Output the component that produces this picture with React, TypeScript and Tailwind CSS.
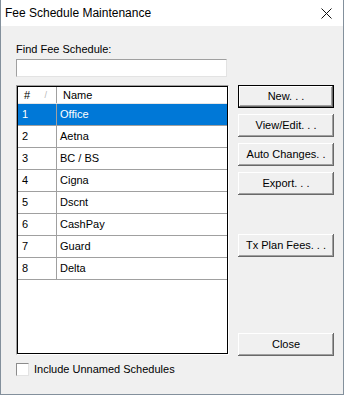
import React from 'react';

const schedules = [
  { id: 1, name: 'Office' },
  { id: 2, name: 'Aetna' },
  { id: 3, name: 'BC / BS' },
  { id: 4, name: 'Cigna' },
  { id: 5, name: 'Dscnt' },
  { id: 6, name: 'CashPay' },
  { id: 7, name: 'Guard' },
  { id: 8, name: 'Delta' },
];

const bevel =
  'shadow-[inset_-1px_-1px_0_#696969,inset_1px_1px_0_#ffffff,inset_-2px_-2px_0_#a0a0a0,inset_2px_2px_0_#f0f0f0]';

function WinButton({ label, isDefault = false, className = '' }: { label: string; isDefault?: boolean; className?: string }) {
  return (
    <div className={`w-[96px] ${className}`}>
      <button
        className={`flex h-[23px] w-full items-center justify-center bg-[#f0f0f0] text-[11px] font-normal text-black ${bevel} ${
          isDefault ? 'border border-black' : ''
        }`}
      >
        {label}
      </button>
    </div>
  );
}

export default function App() {
  return (
    <div className="flex h-[395px] w-[344px] flex-col border-x border-b border-[#83909c] bg-[#f0f0f0] font-['Liberation_Sans',Arial,sans-serif] text-black">
      {/* Title bar */}
      <div className="flex h-[26px] shrink-0 items-center justify-between bg-white pl-[4px] pr-[10px]">
        <span className="text-[12px] leading-none">Fee Schedule Maintenance</span>
        <svg width="11" height="11" viewBox="0 0 11 11" className="mr-[1px]">
          <path d="M0.5 0.5 L10.5 10.5 M10.5 0.5 L0.5 10.5" stroke="#111" strokeWidth="1" />
        </svg>
      </div>

      {/* Body */}
      <div className="flex flex-1 pl-[15px] pt-[17px]">
        {/* Left column */}
        <div className="flex w-[212px] flex-col">
          <label className="h-[13px] text-[11px] leading-[13px]">Find Fee Schedule:</label>
          <div className="mt-[3px] h-[18px] w-[211px] border border-b-[#e3e3e3] border-l-[#a0a0a0] border-r-[#e3e3e3] border-t-[#a0a0a0] bg-white" />

          {/* List */}
          <div className="mt-[8px] h-[270px] w-[213px] border border-b-[#ffffff] border-l-[#a0a0a0] border-r-[#ffffff] border-t-[#a0a0a0]">
            <div className="flex h-full flex-col border border-black bg-white">
              <div className="flex h-[17px] shrink-0 border-b border-[#e5e5e5] text-[11px] leading-[17px]">
                <div className="flex w-[39px] items-center justify-between border-r border-[#a0a0a0] pl-[6px] pr-[9px]">
                  <span>#</span>
                  <span className="text-[9px] text-[#b8b8b8]">/</span>
                </div>
                <div className="pl-[6px]">Name</div>
              </div>
              {schedules.map((s, i) => (
                <div
                  key={s.id}
                  className={`flex h-[22px] shrink-0 border-b border-[#a0a0a0] text-[11px] leading-[21px] ${
                    i === 0 ? 'bg-[#0078d7] text-white' : ''
                  }`}
                >
                  <div className="w-[39px] border-r border-[#a0a0a0] pl-[4px]">{s.id}</div>
                  <div className="pl-[3px]">{s.name}</div>
                </div>
              ))}
            </div>
          </div>

          {/* Checkbox */}
          <div className="mt-[8px] flex items-center">
            <div className="h-[13px] w-[13px] border border-b-[#e3e3e3] border-l-[#8c8c8c] border-r-[#e3e3e3] border-t-[#8c8c8c] bg-white" />
            <span className="ml-[5px] text-[11px] leading-[13px]">Include Unnamed Schedules</span>
          </div>
        </div>

        {/* Buttons */}
        <div className="ml-[10px] mt-[42px] flex flex-col">
          <WinButton label="New. . ." isDefault />
          <WinButton label="View/Edit. . ." className="mt-[6px]" />
          <WinButton label="Auto Changes. ." className="mt-[6px]" />
          <WinButton label="Export. . ." className="mt-[6px]" />
          <WinButton label="Tx Plan Fees. . ." className="mt-[39px]" />
          <WinButton label="Close" className="mt-[76px]" />
        </div>
      </div>
    </div>
  );
}
